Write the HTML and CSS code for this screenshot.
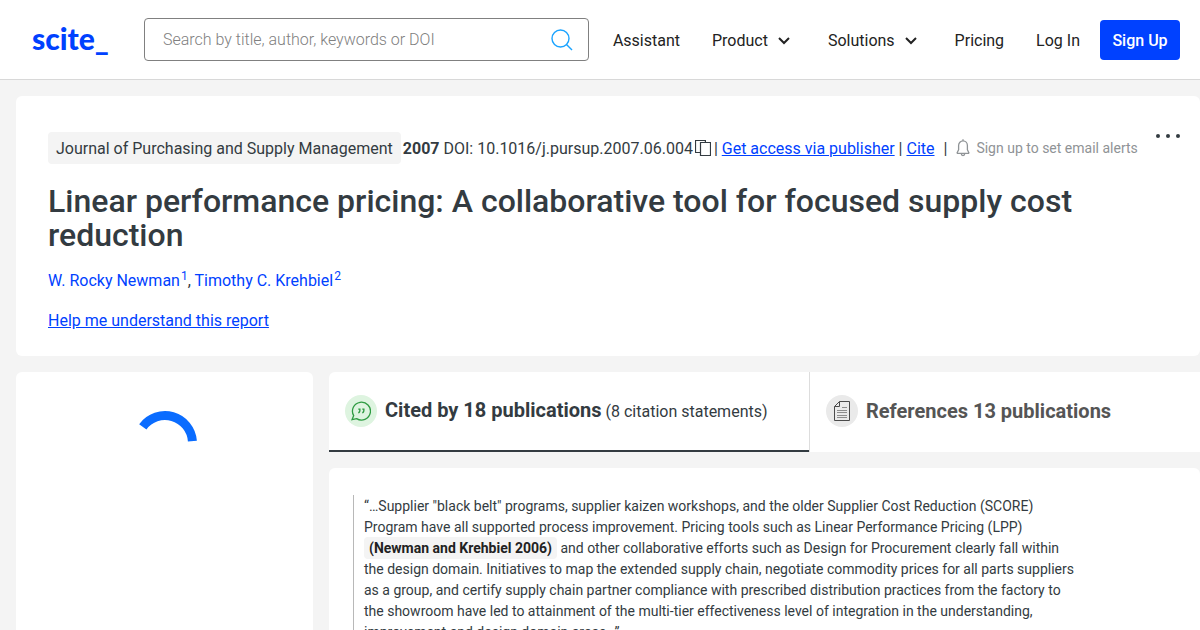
FILE: index.html
```html
<!DOCTYPE html>
<html lang="en">
<head>
    <meta charset="UTF-8">
    <meta name="viewport" content="width=device-width, initial-scale=1">
    <title>Linear performance pricing - scite</title>
    <link rel="stylesheet" href="styles.css">
</head>
<body>
<header class="header">
    <a class="logo" href="#">scite_</a>
    <form class="search">
        <input type="text" aria-label="Search" placeholder="Search by title, author, keywords or DOI">
        <button type="button" aria-label="Search">
            <svg width="22" height="22" viewBox="0 0 22 22" fill="none" stroke="#1aa3ff" stroke-width="1.4"><circle cx="9.5" cy="9.5" r="8.5"/><path d="M15.5 15.5l5.5 5.5"/></svg>
        </button>
    </form>
    <nav class="nav">
        <a href="#">Assistant</a>
        <button type="button">Product <svg width="12" height="8" viewBox="0 0 12 8" fill="none" stroke="#222" stroke-width="2"><path d="M1 1l5 5 5-5"/></svg></button>
        <button type="button">Solutions <svg width="12" height="8" viewBox="0 0 12 8" fill="none" stroke="#222" stroke-width="2"><path d="M1 1l5 5 5-5"/></svg></button>
        <a href="#">Pricing</a>
        <a href="#">Log In</a>
    </nav>
    <a class="signup" href="#">Sign Up</a>
</header>
<main class="page">
    <section class="paper">
        <div class="paper_top">
            <div class="meta">
                <span class="journal">Journal of Purchasing and Supply Management</span>
                <span class="doi"><b>2007</b> DOI: 10.1016/j.pursup.2007.06.004</span>
                <button type="button" class="copy" aria-label="Copy DOI">
                    <svg width="16" height="16" viewBox="0 0 16 16" fill="none" stroke="#333b41" stroke-width="1.2"><path d="M5.5 12.5h-5V.5h9.9v2"/><path d="M5.5 2.5h10v13h-10z"/></svg>
                </button>
                <span class="links">| <a href="#">Get access via publisher</a> | <a href="#">Cite</a></span>
                <span class="bar">|</span>
                <button type="button" class="alerts">
                    <svg width="14" height="18" viewBox="0 0 14 18" fill="none" stroke="#8f9396" stroke-width="1.3"><path d="M7 .3v1.5M.8 14.4h12.4M2.6 11V6.5a4.4 4.6 0 0 1 8.8 0V11M.9 14.2l1.7-3.4M13.1 14.2l-1.7-3.4M5.3 14.8a1.7 1.8 0 0 0 3.4 0"/></svg>
                    Sign up to set email alerts
                </button>
            </div>
            <button type="button" class="more" aria-label="More">
                <svg width="24" height="4" viewBox="0 0 24 4" fill="#333b41"><circle cx="2" cy="2" r="2"/><circle cx="12" cy="2" r="2"/><circle cx="22" cy="2" r="2"/></svg>
            </button>
        </div>
        <h1>Linear performance pricing: A collaborative tool for focused supply cost reduction</h1>
        <p class="authors"><a href="#">W. Rocky Newman<sup>1</sup></a>, <a href="#">Timothy C. Krehbiel<sup>2</sup></a></p>
        <a class="help" href="#">Help me understand this report</a>
    </section>
    <div class="columns">
        <aside class="side">
            <svg width="64" height="64" viewBox="0 0 64 64" fill="none" stroke="#0a6cff" stroke-width="9"><path d="M9.8 15.8A27.5 27.5 0 0 1 59.4 30.1"/></svg>
        </aside>
        <div class="content">
            <div class="tabs">
                <button type="button" class="tab active">
                    <span class="icon green">
                        <svg width="20" height="20" viewBox="0 0 20 20" fill="none" stroke="#2e9b41" stroke-width="1.3"><path d="M1 18.7l1.7-4.1A9 8.9 0 1 1 5.6 17.6z"/><path d="M7.3 8.2h1.6c.2 2.2-.4 3.3-1.6 3.8M11.3 8.2h1.6c.2 2.2-.4 3.3-1.6 3.8"/></svg>
                    </span>
                    <span><strong>Cited by 18 publications</strong> (8 citation statements)</span>
                </button>
                <button type="button" class="tab">
                    <span class="icon grey">
                        <svg width="16" height="20" viewBox="0 0 16 20" fill="none" stroke="#4a4a4a"><path d="M5.5.5h10v19H.5v-14zM5.5.5v5h-5"/><path stroke="#8d8d8d" d="M8 6.5h5M3 9.5h10M3 11.5h10M3 14.5h10M3 16.5h10"/></svg>
                    </span>
                    <strong>References 13 publications</strong>
                </button>
            </div>
            <article class="card">
                <blockquote>
                    “…Supplier "black belt" programs, supplier kaizen workshops, and the older Supplier Cost Reduction (SCORE)<br>
                    Program have all supported process improvement. Pricing tools such as Linear Performance Pricing (LPP)<br>
                    <b class="cite">(Newman and Krehbiel 2006)</b> and other collaborative efforts such as Design for Procurement clearly fall within<br>
                    the design domain. Initiatives to map the extended supply chain, negotiate commodity prices for all parts suppliers<br>
                    as a group, and certify supply chain partner compliance with prescribed distribution practices from the factory to<br>
                    the showroom have led to attainment of the multi-tier effectiveness level of integration in the understanding,<br>
                    improvement and design domain areas…”
                </blockquote>
            </article>
        </div>
    </div>
</main>
</body>
</html>
```
FILE: styles.css
```css
*{box-sizing: border-box;}
body{margin: 0; height: 100vh; overflow: hidden; background: #f4f4f4; color: #333b41;
    font: 16px/24px Roboto, "Liberation Sans", sans-serif;}
a{color: #0041ff;}
button{border: 0; padding: 0; background: none; font: inherit; color: inherit; cursor: pointer;}
svg{display: block; flex: none;}

.header{display: flex; align-items: center; height: 80px; padding: 0 20px 0 32px;
    background: #fff; border-bottom: 1px solid #d8d8d8;}
.logo{width: 112px; padding-bottom: 4px; font: 900 30px/36px Lato, sans-serif; text-decoration: none;}
.search{display: flex; align-items: center; flex: 1; height: 43px; padding: 0 15px 0 18px;
    border: 1px solid #808080; border-radius: 4px;}
.search input{flex: 1; min-width: 0; border: 0; padding: 0; outline: 0; background: none;
    font: 300 16px/24px Roboto, sans-serif;}
.search input::placeholder{color: #808080; opacity: 1;}
.nav{display: flex; gap: 32px; padding: 2px 20px 0 24px; color: #222;}
.nav a{color: #222; text-decoration: none;}
.nav button{display: flex; align-items: center; gap: 10px; padding-right: 6px;}
.signup{min-width: 80px; padding: 9px 12px 7px; border-radius: 4px; background: #0041ff;
    color: #fff; font-weight: 500; text-align: center; text-decoration: none;}

.page{padding: 16px 0 0 16px;}
.paper{padding: 36px 20px 23px 32px; border-radius: 6px; background: #fff;}
.paper_top{display: flex; justify-content: space-between; align-items: flex-start;}
.meta{display: flex; align-items: center; white-space: nowrap;}
.journal{padding: 5px 8px 3px; margin-right: 2px; border-radius: 4px; background: #f4f4f4;}
.doi,.links,.bar{padding-top: 2px;}
.copy{margin: 0 3px 0 2px;}
.bar{margin: 0 9px;}
.alerts{display: flex; align-items: center; gap: 6px; color: #8f9396; font-size: 14px;}
.more{padding: 2px 0;}
h1{margin: 20px 0 17px; font-size: 32px; line-height: 34px; font-weight: 500;}
.authors{margin: 0 0 16px;}
.authors a{text-decoration: none;}
sup{padding-left: 1px; font-size: 12px; line-height: 0;}

.columns{display: flex; gap: 16px; padding-top: 16px;}
.side{display: flex; justify-content: center; width: 297px; min-height: 600px;
    padding-top: 39px; border-radius: 6px; background: #fff; align-items: flex-start;}
.content{flex: 1; min-width: 0;}
.tabs{display: flex; height: 80px; background: #fff; border-radius: 6px 0 0 0;}
.tab{display: flex; align-items: center; gap: 8px; flex: 1; padding: 0 16px 2px;
    border-left: 1px solid #ddd; color: #555; white-space: nowrap;}
.tab.active{flex: none; width: 480px; padding-bottom: 0; border-left: 0;
    border-bottom: 2px solid #333b41; color: #333b41;}
.tab strong{font-size: 20px; font-weight: 700;}
.icon{display: flex; align-items: center; justify-content: center; width: 32px; height: 32px;
    border-radius: 50%;}
.green{background: #def4e0;}
.grey{background: #eaeaea;}
.card{margin-top: 16px; padding: 27px 24px; border-radius: 6px; background: #fff;}
blockquote{margin: 0; padding: 1px 0 0 10px; border-left: 1px solid #b8b8b8;
    font-size: 14px; line-height: 21px; white-space: nowrap;}
.cite{padding: 3px 5px; border-radius: 4px; background: #f4f4f4; color: #222;}
```
